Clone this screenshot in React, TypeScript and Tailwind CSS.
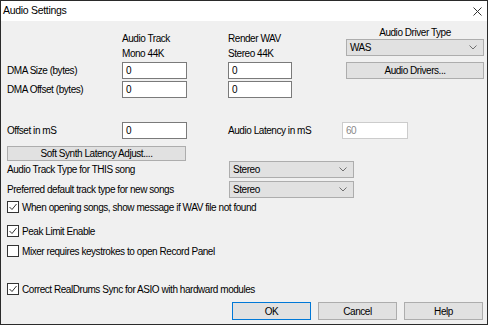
import React from 'react';

const font = { fontFamily: '"Liberation Sans", Arial, sans-serif' };

const Chevron = () => (
  <svg width="8" height="5" viewBox="0 0 8 5" className="shrink-0">
    <polyline points="0.5,0.5 4,4 7.5,0.5" fill="none" stroke="#707070" strokeWidth="1" />
  </svg>
);

const TextBox = ({ value, className = '', disabled = false }: { value: string; className?: string; disabled?: boolean }) => (
  <div
    className={`h-[17px] bg-white flex items-center pl-[3px] ${
      disabled ? 'border border-[#cccccc] text-[#8a8a8a]' : 'border border-[#7a7a7a] text-black'
    } ${className}`}
  >
    {value}
  </div>
);

const Combo = ({ value, className = '' }: { value: string; className?: string }) => (
  <div className={`h-[17px] bg-[#e1e1e1] border border-[#adadad] flex items-center justify-between pl-[3px] pr-[6px] text-black ${className}`}>
    <span>{value}</span>
    <Chevron />
  </div>
);

const Button = ({ label, className = '', focused = false }: { label: string; className?: string; focused?: boolean }) => (
  <div
    className={`bg-[#e1e1e1] flex items-center justify-center text-black ${
      focused ? 'border border-[#0078d7]' : 'border border-[#adadad]'
    } ${className}`}
  >
    {label}
  </div>
);

const Check = ({ checked, label, className = '' }: { checked: boolean; label: string; className?: string }) => (
  <div className={`flex items-center h-[12px] ${className}`}>
    <div className="w-[12px] h-[12px] border border-[#333333] bg-white flex items-center justify-center shrink-0">
      {checked && (
        <svg width="10" height="10" viewBox="0 0 10 10">
          <polyline points="1.5,5 4,7.5 8.5,2" fill="none" stroke="#333333" strokeWidth="1" />
        </svg>
      )}
    </div>
    <span className="ml-[3px] text-black whitespace-nowrap">{label}</span>
  </div>
);

export default function App() {
  return (
    <div className="w-[488px] h-[325px] border border-[#2a2a2a] bg-[#f0f0f0] flex flex-col overflow-hidden" style={font}>
      {/* title bar */}
      <div className="h-[20px] bg-white flex items-center justify-between pl-[2px] pr-[5px] shrink-0">
        <span className="text-[10.5px] tracking-[-0.3px] text-black">Audio Settings</span>
        <svg width="9" height="9" viewBox="0 0 9 9">
          <path d="M0.5 0.5 L8.5 8.5 M8.5 0.5 L0.5 8.5" stroke="#333333" strokeWidth="1" />
        </svg>
      </div>

      <div className="flex flex-col pl-[6px] text-[10px] tracking-[-0.45px] text-black">
        {/* top section */}
        <div className="flex h-[76px]">
          <div className="flex flex-col">
            <div className="flex pt-[10px]">
              <div className="w-[115px]" />
              <div className="w-[106px] flex flex-col">
                <div className="h-[15px] flex items-center">Audio Track</div>
                <div className="h-[14px] flex items-center">Mono 44K</div>
              </div>
              <div className="w-[118px] flex flex-col">
                <div className="h-[15px] flex items-center">Render WAV</div>
                <div className="h-[14px] flex items-center">Stereo 44K</div>
              </div>
            </div>
            <div className="flex items-center mt-[2px]">
              <div className="w-[115px]">DMA Size (bytes)</div>
              <div className="w-[106px]">
                <TextBox value="0" className="w-[65px]" />
              </div>
              <TextBox value="0" className="w-[64px]" />
            </div>
            <div className="flex items-center mt-[2px]">
              <div className="w-[115px]">DMA Offset (bytes)</div>
              <div className="w-[106px]">
                <TextBox value="0" className="w-[65px]" />
              </div>
              <TextBox value="0" className="w-[64px]" />
            </div>
          </div>
          <div className="flex flex-col w-[138px] pt-[5px]">
            <div className="h-[13px] flex items-center justify-center">Audio Driver Type</div>
            <Combo value="WAS" className="w-[138px]" />
            <Button label="Audio Drivers..." className="w-[138px] h-[17px] mt-[6px]" />
          </div>
        </div>

        {/* offset row */}
        <div className="flex items-center mt-[25px]">
          <div className="w-[115px]">Offset in mS</div>
          <div className="w-[106px]">
            <TextBox value="0" className="w-[65px]" />
          </div>
          <div className="w-[114px]">Audio Latency in mS</div>
          <TextBox value="60" disabled className="w-[66px]" />
        </div>

        <Button label="Soft Synth Latency Adjust...." className="w-[179px] h-[15px] mt-[7px]" />

        <div className="flex items-center">
          <div className="w-[222px]">Audio Track Type for THIS song</div>
          <Combo value="Stereo" className="w-[125px]" />
        </div>
        <div className="flex items-center mt-[3px]">
          <div className="w-[222px]">Preferred default track type for new songs</div>
          <Combo value="Stereo" className="w-[125px]" />
        </div>

        <Check checked label="When opening songs, show message if WAV file not found" className="mt-[3px]" />
        <Check checked label="Peak Limit Enable" className="mt-[12px]" />
        <Check checked={false} label="Mixer requires keystrokes to open Record Panel" className="mt-[8px]" />
        <Check checked label="Correct RealDrums Sync for ASIO with hardward modules" className="mt-[26px]" />

        <div className="flex justify-end gap-[7px] pr-[4px] mt-[7px]">
          <Button label="OK" focused className="w-[79px] h-[18px]" />
          <Button label="Cancel" className="w-[79px] h-[18px]" />
          <Button label="Help" className="w-[79px] h-[18px]" />
        </div>
      </div>
    </div>
  );
}
